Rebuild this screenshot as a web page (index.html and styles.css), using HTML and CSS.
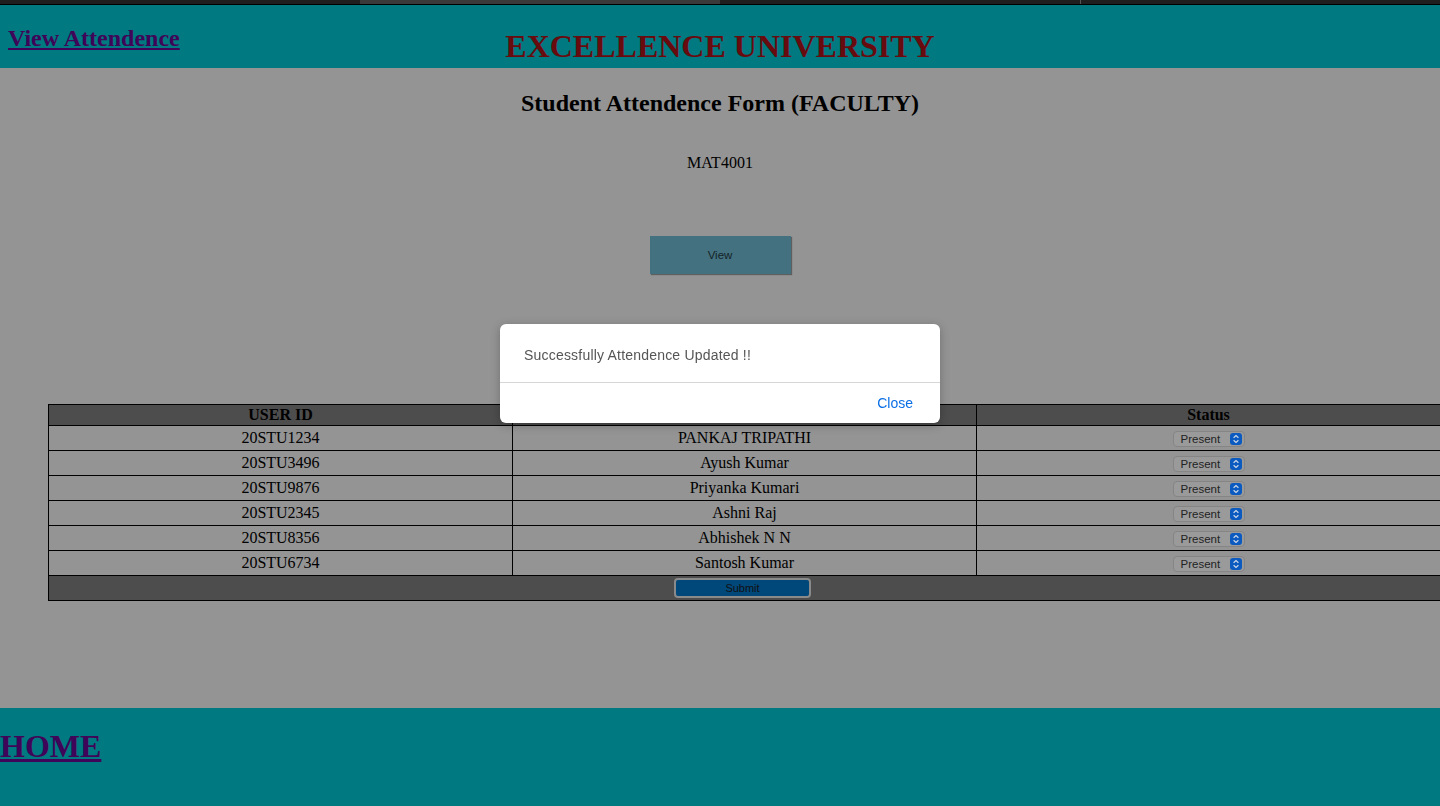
FILE: index.html
```html
<!DOCTYPE html>
<html lang="en">
<head>
    <meta charset="UTF-8">
    <title>Excellence University — Attendence</title>
    <meta name="viewport" content="width=device-width, initial-scale=1.0">
    <link rel="stylesheet" href="styles.css">
</head>
<body>

<div class="tabbar">
    <span></span>
    <span class="current"></span>
    <span></span>
    <span class="split"></span>
</div>

<header class="topbar">
    <a class="nav-link" href="#">View Attendence</a>
    <h1>EXCELLENCE UNIVERSITY</h1>
</header>

<main>
    <h2>Student Attendence Form (FACULTY)</h2>
    <p class="course">MAT4001</p>
    <button class="view-btn" type="button">View</button>

    <table class="attendence">
        <thead>
            <tr>
                <th>USER ID</th>
                <th>NAME</th>
                <th>Status</th>
            </tr>
        </thead>
        <tbody>
            <tr><td>20STU1234</td><td>PANKAJ TRIPATHI</td><td><span class="select">Present<i><svg viewBox="0 0 12 12"><path d="M3.6 4.8 6 2.6l2.4 2.2M3.6 7.2 6 9.4l2.4-2.2"/></svg></i></span></td></tr>
            <tr><td>20STU3496</td><td>Ayush Kumar</td><td><span class="select">Present<i><svg viewBox="0 0 12 12"><path d="M3.6 4.8 6 2.6l2.4 2.2M3.6 7.2 6 9.4l2.4-2.2"/></svg></i></span></td></tr>
            <tr><td>20STU9876</td><td>Priyanka Kumari</td><td><span class="select">Present<i><svg viewBox="0 0 12 12"><path d="M3.6 4.8 6 2.6l2.4 2.2M3.6 7.2 6 9.4l2.4-2.2"/></svg></i></span></td></tr>
            <tr><td>20STU2345</td><td>Ashni Raj</td><td><span class="select">Present<i><svg viewBox="0 0 12 12"><path d="M3.6 4.8 6 2.6l2.4 2.2M3.6 7.2 6 9.4l2.4-2.2"/></svg></i></span></td></tr>
            <tr><td>20STU8356</td><td>Abhishek N N</td><td><span class="select">Present<i><svg viewBox="0 0 12 12"><path d="M3.6 4.8 6 2.6l2.4 2.2M3.6 7.2 6 9.4l2.4-2.2"/></svg></i></span></td></tr>
            <tr><td>20STU6734</td><td>Santosh Kumar</td><td><span class="select">Present<i><svg viewBox="0 0 12 12"><path d="M3.6 4.8 6 2.6l2.4 2.2M3.6 7.2 6 9.4l2.4-2.2"/></svg></i></span></td></tr>
        </tbody>
        <tfoot>
            <tr>
                <td colspan="3"><button class="submit-btn" type="button">Submit</button></td>
            </tr>
        </tfoot>
    </table>
</main>

<footer>
    <a class="home-link" href="#">HOME</a>
</footer>

<!-- alert after saving -->
<div class="dialog">
    <p class="dialog-text">Successfully Attendence Updated !!</p>
    <div class="dialog-actions">
        <a class="dialog-close">Close</a>
    </div>
</div>

</body>
</html>
```

FILE: styles.css
```css
* {
    box-sizing: border-box;
    margin: 0;
    padding: 0;
}

html, body {
    overflow: hidden;
}

body {
    min-height: 100vh;
    display: flex;
    flex-direction: column;
    font-family: "Liberation Serif", "Times New Roman", serif;
    background-color: #949494;
    color: #000;
}

/* strip left over from the browser tabs */
.tabbar {
    height: 5px;
    display: grid;
    grid-template-columns: 360px 360px 360px 1fr;
    background-color: #000;
    padding-bottom: 1px;
}

.tabbar span {
    background-color: #1f1f1f;
}

.tabbar .current {
    background-color: #3a3a3a;
}

.tabbar .split {
    border-left: 1px solid #555;
}

.topbar {
    height: 63px;
    background-color: #007980;
    display: grid;
    grid-template-columns: 1fr auto 1fr;
    align-items: start;
}

.nav-link {
    justify-self: start;
    margin: 19px 0 0 8px;
    font-size: 24px;
    line-height: 28px;
    font-weight: bold;
    color: #3f0558;
    text-decoration: underline;
}

.topbar h1 {
    grid-column: 2;
    margin-top: 21px;
    font-size: 32px;
    line-height: 40px;
    font-weight: bold;
    color: #670b0f;
}

main {
    flex: 1;
    display: flex;
    flex-direction: column;
    align-items: center;
    padding-top: 21px;
}

main h2 {
    font-size: 24px;
    line-height: 28px;
    font-weight: bold;
}

.course {
    margin-top: 36px;
    font-size: 16px;
    line-height: 20px;
}

.view-btn {
    margin-top: 63px;
    width: 141px;
    height: 38px;
    border: none;
    background-color: #44717f;
    box-shadow: 1px 1px 1px #5f5f5f;
    font-family: "Liberation Sans", Arial, sans-serif;
    font-size: 11.5px;
    color: #132329;
}

.attendence {
    align-self: flex-start;
    margin: 130px 0 0 48px;
    width: 1393px;
    border-collapse: collapse;
    table-layout: fixed;
    font-size: 16px;
}

.attendence th,
.attendence td {
    border: 1px solid #000;
    text-align: center;
    vertical-align: middle;
    padding: 0;
}

.attendence th {
    height: 21px;
    background-color: #4d4d4d;
    line-height: 18px;
}

.attendence td {
    height: 25px;
    line-height: 18px;
}

.attendence tfoot td {
    background-color: #4d4d4d;
}

.select {
    display: inline-flex;
    align-items: center;
    justify-content: space-between;
    width: 72px;
    height: 16px;
    padding: 0 2px 0 7px;
    border: 1px solid #858585;
    border-radius: 4px;
    background-color: #9a9a9a;
    font-family: "Liberation Sans", Arial, sans-serif;
    font-size: 11.5px;
    line-height: 14px;
    color: #222;
    vertical-align: middle;
}

.select i {
    width: 12px;
    height: 12px;
    border-radius: 3px;
    background-color: #0b5ac0;
    display: flex;
}

.select svg {
    width: 12px;
    height: 12px;
    fill: none;
    stroke: #cfd8e8;
    stroke-width: 1.2;
}

.submit-btn {
    display: block;
    margin: 0 auto;
    position: relative;
    left: -2px;
    width: 137px;
    height: 20px;
    border: 2px solid #8a8a8a;
    border-radius: 4px;
    background-color: #00477a;
    font-family: "Liberation Sans", Arial, sans-serif;
    font-size: 11px;
    color: #111;
}

footer {
    height: 98px;
    background-color: #007980;
}

.home-link {
    display: inline-block;
    margin-top: 20px;
    font-size: 32px;
    line-height: 36px;
    font-weight: bold;
    color: #3f0558;
    text-decoration: underline;
}

/* alert window */
.dialog {
    position: fixed;
    top: 324px;
    left: 500px;
    width: 440px;
    height: 99px;
    background-color: #fff;
    border-radius: 6px;
    box-shadow: 0 2px 10px rgba(0, 0, 0, 0.25);
    font-family: "Liberation Sans", Arial, sans-serif;
    font-size: 14px;
}

.dialog-text {
    height: 59px;
    padding: 22px 24px 0;
    line-height: 18px;
    letter-spacing: 0.2px;
    color: #555;
    border-bottom: 1px solid #d6d6d6;
}

.dialog-actions {
    display: flex;
    justify-content: flex-end;
    padding: 11px 27px 0 0;
}

.dialog-close {
    line-height: 18px;
    color: #0b6fe6;
    cursor: pointer;
}
```
